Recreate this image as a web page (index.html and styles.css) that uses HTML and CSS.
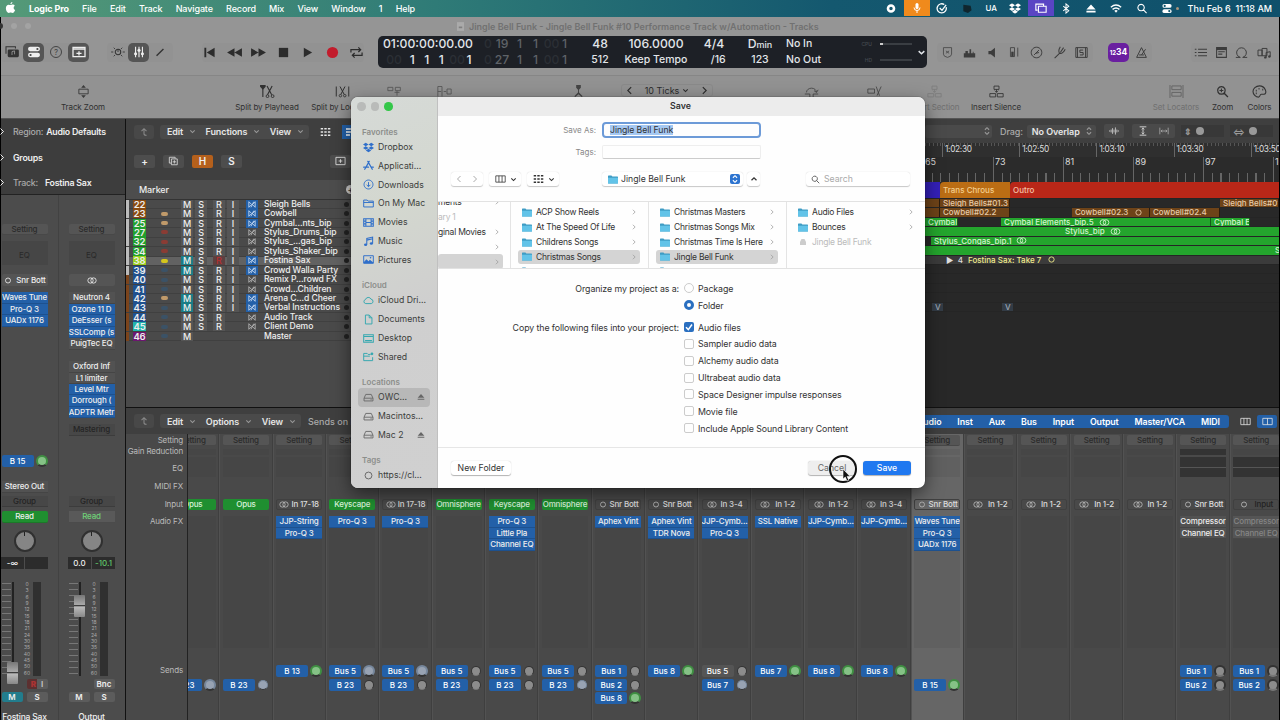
FILE: index.html
```html
<!DOCTYPE html>
<html lang="en">
<head>
    <meta charset="UTF-8">
    <meta name="viewport" content="width=device-width, initial-scale=1.0">
    <title>Jingle Bell Funk - Tracks</title>
    <link rel="stylesheet" href="styles.css">
</head>
<body>
    <svg class="defs" aria-hidden="true">
        <symbol id="apple" viewBox="0 0 12 14"><path fill="currentColor" d="M8.2 0c.1 1.400-1 2.600-2.300 2.600C5.800 1.300 6.900.2 8.200 0zM6.100 3.600c.6 0 1.400-.7 2.600-.6 1 .1 1.800.5 2.300 1.300-2 1.300-1.700 4 .4 4.900-.5 1.500-1.700 3.500-3 3.500-.9 0-1.200-.5-2.200-.5s-1.400.5-2.200.5C2.300 12.700.6 9.700.6 7.200c0-2.600 1.600-4 3.200-4 1 0 1.700.4 2.300.4z"/></symbol>
        <symbol id="stereo" viewBox="0 0 12 8"><g fill="none" stroke="currentColor"><circle cx="4.200" cy="4" r="3.200"/><circle cx="7.800" cy="4" r="3.200"/></g></symbol>
        <symbol id="mono" viewBox="0 0 12 8"><circle cx="6" cy="4" r="3" fill="none" stroke="currentColor"/></symbol>
        <symbol id="dropbox" viewBox="0 0 16 14"><path fill="currentColor" d="M4 0l4 2.600-4 2.600-4-2.600zM12 0l4 2.600-4 2.600-4-2.600zM4 5.200l4 2.600-4 2.600-4-2.600zM12 5.200l4 2.600-4 2.600-4-2.600zM8 8.700l4 2.600L8 14l-4-2.700z"/></symbol>
        <symbol id="apps" viewBox="0 0 16 16"><path fill="none" stroke="currentColor" stroke-width="1.800" stroke-linecap="round" d="M9 2L3.500 12M7 2l6.500 11.500M1 10.500h7M12 10.500h3M2.500 13.500l.2-.4"/></symbol>
        <symbol id="download" viewBox="0 0 16 16"><path fill="none" stroke="currentColor" stroke-width="1.400" d="M8 1.500a6.500 6.500 0 1 0 .01 0zM8 4.500v6.500M5.300 8.500L8 11.200l2.700-2.700"/></symbol>
        <symbol id="dir" viewBox="0 0 16 16"><path fill="none" stroke="currentColor" stroke-width="1.400" d="M1 3h5l1.500 1.500H15V13H1zM1 6.500h14"/></symbol>
        <symbol id="movie" viewBox="0 0 16 16"><path fill="none" stroke="currentColor" stroke-width="1.500" d="M1 2.500h14v11H1zM4.200 2.500v11M11.800 2.500v11M4 8h8M1 6h3M1 10h3M12 6h3M12 10h3"/></symbol>
        <symbol id="music" viewBox="0 0 16 16"><path fill="none" stroke="currentColor" stroke-width="1.500" d="M5.500 12.500V3.500L14 1.500v9M5.500 6L14 4"/><ellipse cx="3.800" cy="12.800" rx="2.300" ry="1.900" fill="currentColor"/><ellipse cx="12.200" cy="11" rx="2.300" ry="1.900" fill="currentColor"/></symbol>
        <symbol id="picture" viewBox="0 0 16 16"><path fill="none" stroke="currentColor" stroke-width="1.400" d="M1 2.500h14v11H1z"/><path fill="currentColor" d="M1 12l4-4.500 3 3 2-2 5 4v1H1z"/><circle cx="11" cy="5.500" r="1.200" fill="currentColor"/></symbol>
        <symbol id="cloud" viewBox="0 0 16 16"><path fill="none" stroke="currentColor" stroke-width="1.400" d="M4 12.500a3 3 0 0 1-.3-5.900A4.200 4.200 0 0 1 11.600 6a3.300 3.300 0 0 1 .4 6.500z"/></symbol>
        <symbol id="doc" viewBox="0 0 16 16"><path fill="none" stroke="currentColor" stroke-width="1.400" d="M3.500 1.500H9l4 4v9H3.500zM9 1.500v4h4"/></symbol>
        <symbol id="desktop" viewBox="0 0 16 16"><path fill="none" stroke="currentColor" stroke-width="1.500" d="M1 2.500h14v11H1zM1 5h14"/><path fill="currentColor" d="M3 10h10v2H3z"/></symbol>
        <symbol id="shared" viewBox="0 0 16 16"><path fill="none" stroke="currentColor" stroke-width="1.400" d="M1 3.500h5l1.500 1.500H11M14 9v5H1V3.500M1 7.500h9"/><circle cx="13" cy="4" r="2" fill="currentColor"/></symbol>
        <symbol id="drive" viewBox="0 0 16 16"><path fill="none" stroke="currentColor" stroke-width="1.300" d="M1.500 9L4 3.500h8L14.500 9v4h-13zM1.500 9h13M11 11.200h1.500"/></symbol>
        <symbol id="ring" viewBox="0 0 16 16"><circle cx="8" cy="8" r="5" fill="none" stroke="currentColor" stroke-width="1.400"/></symbol>
        <symbol id="eject" viewBox="0 0 12 12"><path fill="currentColor" d="M6 1.500l5 5.500H1zM1 8.500h10v1.800H1z"/></symbol>
        <symbol id="folder" viewBox="0 0 16 13"><path fill="#3f9cc4" d="M1 0h4.500L7 1.500h8a1 1 0 0 1 1 1V12a1 1 0 0 1-1 1H1a1 1 0 0 1-1-1V1a1 1 0 0 1 1-1z"/><path fill="#62c3e8" d="M0 3.500h16V12a1 1 0 0 1-1 1H1a1 1 0 0 1-1-1z"/></symbol>
        <symbol id="down" viewBox="0 0 8 8"><path fill="none" stroke="currentColor" stroke-width="1.300" d="M1.500 2.800L4 5.200l2.500-2.400"/></symbol>
        <symbol id="up" viewBox="0 0 8 8"><path fill="none" stroke="currentColor" stroke-width="1.300" d="M1.500 5.200L4 2.800l2.500 2.400"/></symbol>
        <symbol id="left" viewBox="0 0 8 8"><path fill="none" stroke="currentColor" d="M5.500 1L2.500 4l3 3"/></symbol>
        <symbol id="right" viewBox="0 0 8 8"><path fill="none" stroke="currentColor" d="M2.500 1l3 3-3 3"/></symbol>
        <symbol id="updown" viewBox="0 0 8 12"><path fill="none" stroke="currentColor" stroke-width="1.300" d="M1.500 4.500L4 2l2.500 2.500M1.500 7.500L4 10l2.500-2.500"/></symbol>
        <symbol id="search" viewBox="0 0 12 12"><path fill="none" stroke="currentColor" stroke-width="1.200" d="M5 1.500a3.500 3.500 0 1 0 .01 0zM7.600 7.600L11 11"/></symbol>
        <symbol id="columns" viewBox="0 0 14 10"><path fill="none" stroke="currentColor" d="M1 1h12v8H1zM5 1v8M9 1v8"/></symbol>
        <symbol id="split" viewBox="0 0 14 10"><path fill="none" stroke="currentColor" d="M1 1h12v8H1zM7 1v8"/></symbol>
        <symbol id="dots" viewBox="0 0 12 10"><path fill="currentColor" d="M0 0h3v2H0zM4.500 0h3v2h-3zM9 0h3v2H9zM0 4h3v2H0zM4.500 4h3v2h-3zM9 4h3v2H9zM0 8h3v2H0zM4.500 8h3v2h-3zM9 8h3v2H9z"/></symbol>
        <symbol id="back" viewBox="0 0 12 12"><path fill="none" stroke="currentColor" stroke-width="1.300" d="M3 5l3-3 3 3M6 2v6q0 2 3 2"/></symbol>
        <symbol id="flex" viewBox="0 0 12 10"><path fill="none" stroke="currentColor" stroke-width="1.200" d="M1.500 9V1l4 4-4 4M10.500 1v8l-4-4 4-4M4.500 9l4-8"/></symbol>
        <symbol id="scissors" viewBox="0 0 16 14"><path fill="none" stroke="currentColor" stroke-width="1.200" d="M3 3v10M7.500 1l5 9.500M13 1L8 10.500"/><path fill="currentColor" d="M0 0h6v2L3 5 0 2z"/><g fill="none" stroke="currentColor"><circle cx="8" cy="12" r="1.500"/><circle cx="13.500" cy="12" r="1.500"/></g></symbol>
        <symbol id="scissors-between" viewBox="0 0 18 14"><path fill="none" stroke="currentColor" stroke-width="1.200" d="M1.500 1v12M16.500 1v12M6 1l5 9.500M12 1L7 10.500"/><g fill="none" stroke="currentColor"><circle cx="6.500" cy="12" r="1.500"/><circle cx="11.700" cy="12" r="1.500"/></g></symbol>
        <symbol id="section" viewBox="0 0 18 14"><path fill="none" stroke="currentColor" d="M6 .5h6v4H6zM9 4.500V8M7 6l2 2 2-2M1 9.500h7v4H1zM10 9.500h7v4h-7z"/></symbol>
    </svg>

    <div class="screen">
        <header class="menubar">
            <svg class="apple"><use href="#apple"/></svg>
            <nav class="menus">
                <b>Logic Pro</b><span>File</span><span>Edit</span><span>Track</span><span>Navigate</span><span>Record</span><span>Mix</span><span>View</span><span>Window</span><span>1</span><span>Help</span>
            </nav>
            <div class="status">
                <svg viewBox="0 0 12 12"><circle cx="6" cy="6" r="3.300" fill="none" stroke="#fff" stroke-width="2.800"/></svg>
                <span class="pill orange"><svg viewBox="0 0 12 12"><rect x="4.500" y="1" width="3" height="6" rx="1.500" fill="#fff"/><path d="M3 5.500a3 3 0 0 0 6 0M6 8.500V11" fill="none" stroke="#fff"/></svg></span>
                <svg viewBox="0 0 12 12"><path d="M10.500 4.500A5 5 0 1 1 8.500 1.700M3.500 5.500L6 8l4.500-6" fill="none" stroke="#fff" stroke-width="1.400"/></svg>
                <svg viewBox="0 0 12 12"><path d="M2 2l8 1 1 5-4 3-5-2z" fill="#10262e"/></svg>
                <span class="ua">UA</span>
                <svg viewBox="0 0 16 14"><use href="#dropbox"/></svg>
                <span class="pill violet"><svg viewBox="0 0 14 12"><path d="M3 8.500H1v-7h9V4M4 4h9v7H4z" fill="none" stroke="#fff" stroke-width="1.300"/></svg></span>
                <svg viewBox="0 0 12 12"><path d="M3 3.500l6 5L6 11V1l3 2.500-6 5" fill="none" stroke="#fff" stroke-width="1.100"/></svg>
                <svg viewBox="0 0 12 12"><use href="#eject"/></svg>
                <svg viewBox="0 0 14 12"><path d="M1 4.500q6-5 12 0M3 7q4-3.300 8 0" fill="none" stroke="#fff" stroke-width="1.600"/><path d="M5 8.500q2-1.600 4 0L7 11z" fill="#fff"/></svg>
                <svg viewBox="0 0 12 12"><use href="#search"/></svg>
                <svg viewBox="0 0 12 12"><rect x="1" y="1" width="10" height="4.300" rx="2.100" fill="#fff"/><rect x="1" y="6.700" width="10" height="4.300" rx="2.100" fill="#fff"/><circle cx="3.500" cy="3.200" r="1.200" fill="#10556d"/><circle cx="8.500" cy="8.800" r="1.200" fill="#10556d"/></svg>
                <i class="mic-dot"></i>
                <span class="clock">Thu Feb 6&nbsp; 11:18 AM</span>
            </div>
        </header>

        <div class="titlebar">
            <div class="dim-lights"><i></i><i></i><i></i></div>
            <svg class="title-doc" viewBox="0 0 8 10"><path d="M0 0h8v10H0z" fill="#aaa"/><path d="M2 5h4v2H2z" fill="#808080"/></svg>
            <span>Jingle Bell Funk - Jingle Bell Funk #10 Performance Track w/Automation - Tracks</span>
        </div>

        <div class="control-bar">
            <div class="ctl-group left-group">
                <span class="ctl"><svg viewBox="0 0 16 14"><path d="M1 9V1h11v2" fill="none" stroke="#333" stroke-width="1.200"/><rect x="3" y="4" width="13" height="9" rx="1.500" fill="#333"/><path d="M8 10.500V6.500l3-.8v4" stroke="#999" fill="none"/></svg></span>
                <span class="ctl on"><svg viewBox="0 0 16 14"><rect x="1" y="1" width="14" height="5" rx="2.500" fill="#eee"/><rect x="1" y="8" width="14" height="5" rx="2.500" fill="#eee"/><circle cx="12" cy="3.500" r="1.300" fill="#444"/><circle cx="4" cy="10.500" r="1.300" fill="#444"/></svg></span>
                <span class="ctl help">?</span>
                <span class="ctl on"><svg viewBox="0 0 16 14"><path d="M1 1.500h14v11H1zM1 3.500h14M5 8.500h6M8 6v5" fill="none" stroke="#eee" stroke-width="1.500"/></svg></span>
            </div>
            <div class="ctl-group edit-group">
                <span class="ctl"><svg viewBox="0 0 16 14"><circle cx="8" cy="7" r="3.200" fill="none" stroke="#333" stroke-width="1.200"/><path d="M8 4v3M0 7h2.500M13.500 7H16M3 2l1.500 1.500M13 2l-1.500 1.500M3 12l1.500-1.500M13 12l-1.500-1.500" stroke="#333"/></svg></span>
                <span class="ctl on"><svg viewBox="0 0 16 14"><path d="M4 1v12M8 1v12M12 1v12" stroke="#eee" stroke-width="1.300"/><circle cx="4" cy="9" r="1.800" fill="#eee"/><circle cx="8" cy="5" r="1.800" fill="#eee"/><circle cx="12" cy="9" r="1.800" fill="#eee"/></svg></span>
                <span class="ctl"><svg viewBox="0 0 16 14"><path d="M4 11.500l8-8" stroke="#333" stroke-width="1.600"/></svg></span>
            </div>
            <div class="ctl-group transport">
                <svg viewBox="0 0 16 14"><path d="M2.500 2v10h2V2zM13.500 2v10L5 7z" fill="#2c2c2c"/></svg>
                <svg viewBox="0 0 16 14"><path d="M8 2.500v9L0 7zM16 2.500v9L8 7z" fill="#2c2c2c"/></svg>
                <svg viewBox="0 0 16 14"><path d="M0 2.500v9L8 7zM8 2.500v9L16 7z" fill="#2c2c2c"/></svg>
                <svg viewBox="0 0 16 14"><path d="M3 2h10v10H3z" fill="#2c2c2c"/></svg>
                <svg viewBox="0 0 16 14"><path d="M4 2v10l9-5z" fill="#2c2c2c"/></svg>
                <svg viewBox="0 0 16 14"><circle cx="8" cy="7" r="6" fill="#c21c2c"/></svg>
                <svg viewBox="0 0 16 14"><path d="M2 7V4h10M10 1.500L12.500 4 10 6.500M14 7v3H4M6 7.500L3.500 10 6 12.500" fill="none" stroke="#2c2c2c" stroke-width="1.300"/></svg>
            </div>
            <div class="lcd">
                <div class="lcd-col time"><b>01:00:00:00.00</b><b class="beats"><i>00</i><em>1</em><em>1</em><em>1</em><i>00</i><em>1</em></b></div>
                <div class="lcd-col range"><b><i>0</i><em>19</em><em>1</em><em>1</em><i>00</i><em>1</em></b><b><i>0</i><em>27</em><em>1</em><em>1</em><i>00</i><em>1</em></b></div>
                <div class="lcd-col rate"><b>48</b><span>512</span></div>
                <div class="lcd-col tempo"><b>106.0000</b><span>Keep Tempo</span></div>
                <div class="lcd-col sig"><b>4/4</b><span>&nbsp; &nbsp;/16</span></div>
                <div class="lcd-col key"><b>D<small>min</small></b><span>123</span></div>
                <div class="lcd-col io"><span>No In</span><span>No Out</span></div>
                <div class="lcd-col load"><span>CPU<i></i></span><span>HD<i></i></span></div>
                <svg class="lcd-more"><use href="#down"/></svg>
            </div>
            <div class="ctl-group tools">
                <svg viewBox="0 0 16 16"><path d="M3 2h10v8q0 3-5 4-5-1-5-4zM6 6l4 3M10 6L6 9" fill="none" stroke="#444"/></svg>
                <svg viewBox="0 0 16 16"><path d="M1 9h14v5H1zM3 6h3v3H3zM8 4h2v5H8zM12 7h1v2h-1z" fill="#3c3c3c"/></svg>
                <svg viewBox="0 0 16 16"><path d="M3 6h3l5-4v12l-5-4H3z" fill="#3c3c3c"/></svg>
                <svg viewBox="0 0 16 16"><path d="M3 2h5v11H3zM12 2v11" fill="none" stroke="#3c3c3c"/><path d="M4 7h3v6H4z" fill="#3c3c3c"/></svg>
                <svg viewBox="0 0 16 16"><path d="M8 1.500a6.500 6.500 0 1 0 .01 0zM5 11l6-6M7 9l4-1" fill="none" stroke="#3c3c3c" stroke-width="1.200"/></svg>
                <svg viewBox="0 0 16 16"><path d="M2 15l6-6M8 9q-2-3 1-8M8 9q4 1 7-5M9 8l4-6" fill="none" stroke="#3c3c3c" stroke-width="1.300"/></svg>
                <svg viewBox="0 0 16 16"><path d="M1 2h14v12H1zM3 2v12M13 2v12M10 5H6v3h4v3H6" fill="none" stroke="#3c3c3c" stroke-width="1.200"/></svg>
            </div>
            <div class="ctl-group count">
                <b class="count-in"><small>12</small>34</b>
                <svg viewBox="0 0 16 16"><path d="M8 2l6 12H2zM5 11h6M8 11l5-7" fill="none" stroke="#3c3c3c" stroke-width="1.200"/></svg>
            </div>
            <div class="ctl-group browsers">
                <svg viewBox="0 0 16 16"><path d="M1 4h2M1 8h2M1 12h2M5 4h11M5 8h11M5 12h11" stroke="#3c3c3c" stroke-width="1.300"/></svg>
                <svg viewBox="0 0 16 16"><path d="M2 2h12v12H2zM4 7h8M4 10h5" fill="none" stroke="#3c3c3c" stroke-width="1.300"/><path d="M2 2h12v3H2z" fill="#3c3c3c"/></svg>
                <svg viewBox="0 0 16 16"><path d="M1 14h5.500A6 6 0 1 1 9.500 14H15" fill="none" stroke="#3c3c3c" stroke-width="1.200"/></svg>
                <svg viewBox="0 0 18 16"><path d="M1 5h5v7H1zM6 3h6v9H6zM11 14V8l5-1v6" fill="none" stroke="#3c3c3c" stroke-width="1.200"/><circle cx="10" cy="14" r="1.500" fill="#3c3c3c"/><circle cx="15" cy="13" r="1.500" fill="#3c3c3c"/></svg>
            </div>
        </div>

        <div class="toolbar">
            <div class="tool zoom-tool"><svg viewBox="0 0 16 14"><path d="M3 4.500h10v5H3z" fill="none" stroke="#3a3a3a"/><path d="M8 0l2.500 3h-5zM8 14l2.500-3h-5z" fill="#3a3a3a"/></svg>Track Zoom</div>
            <div class="tool playhead-tool"><svg><use href="#scissors"/></svg>Split by Playhead</div>
            <div class="tool locator-tool"><svg><use href="#scissors-between"/></svg>Split by Locators</div>
            <div class="tool join-tool"><svg viewBox="0 0 18 14"><path d="M1 2h6v4H1zM10 2h6v4h-6zM9 8h6M12 6v6" fill="none" stroke="#555"/></svg></div>
            <div class="tool bounce-tool"><svg viewBox="0 0 18 14"><path d="M1 1h5v12M1 1v12M1 7h4M8 7h3M12 4h5v6h-5z" fill="none" stroke="#555"/></svg></div>
            <div class="tool nudge-icon"><svg viewBox="0 0 14 14"><path d="M4.500 0h5v3L7.500 5v3l4 4-1 1L7 10l-3.500 3-1-1 4-4V5l-2-2z" fill="#444"/></svg></div>
            <div class="nudge"><svg><use href="#left"/></svg><span>10 Ticks <svg><use href="#down"/></svg></span><svg><use href="#right"/></svg></div>
            <div class="tool repeat-tool"><svg viewBox="0 0 18 14"><path d="M3 8a6 5 0 0 1 12 0M12 6l3 2 2-3M1 10h6v4M11 14v-4h6" fill="none" stroke="#444"/></svg></div>
            <div class="tool cut-tool"><svg viewBox="0 0 18 14"><path d="M1 4h8v5H1zM11 1l4 11M17 1l-5 11" fill="none" stroke="#444"/></svg></div>
            <div class="tool faded insert-section"><svg><use href="#section"/></svg>Insert Section</div>
            <div class="tool silence-tool"><svg><use href="#section"/></svg>Insert Silence</div>
            <div class="tool faded set-locators"><svg viewBox="0 0 16 14"><path d="M3 1h10v4H3zM1 0v14M15 0v14M3 8h10v4H3z" fill="none" stroke="#444"/></svg>Set Locators</div>
            <div class="tool small-tool"><svg viewBox="0 0 12 12"><use href="#search"/><path d="M3.200 5h3.600M5 3.200v3.600" stroke="#333"/></svg>Zoom</div>
            <div class="tool small-tool"><svg viewBox="0 0 16 14"><path d="M8 1C4 1 1 4 1 7s3 6 6 6c2 0 1-3 3-3h3c4-1 1-9-5-9z" fill="none" stroke="#333" stroke-width="1.200"/><path d="M4 6h1M7 4h1M11 5h1M4 9h1" stroke="#333" stroke-width="1.800"/></svg>Colors</div>
        </div>

        <main class="workspace">
            <aside class="inspector">
                <div class="inspector-head">
                    <p><svg><use href="#right"/></svg><span>Region:</span> Audio Defaults</p>
                    <p><svg><use href="#right"/></svg>Groups</p>
                    <p><svg><use href="#right"/></svg><span>Track:</span>&nbsp; Fostina Sax</p>
                </div>
                <div class="inspector-strips" id="inspector-strips"></div>
            </aside>

            <div class="main-column">
                <section class="tracks-area">
                    <div class="track-panel">
                        <div class="panel-bar">
                            <span class="back-btn"><svg><use href="#back"/></svg></span>
                            <div class="bar-menus tracks-menus"><span>Edit <svg><use href="#down"/></svg></span><span>Functions <svg><use href="#down"/></svg></span><span>View <svg><use href="#down"/></svg></span></div>
                            <svg class="grid-icon"><use href="#dots"/></svg>
                            <span class="list-icon"><svg viewBox="0 0 12 10"><path d="M0 2h5M7 2h5M0 5h8M10 5h2M0 8h4M6 8h6" stroke="#fff" stroke-width="1.500"/></svg></span>
                        </div>
                        <div class="track-tools">
                            <span>+</span>
                            <span><svg viewBox="0 0 12 12"><path d="M3 8.500H1v-7h7V3M3.500 3.500h7v7h-7zM7 5v4M5 7h4" fill="none" stroke="#ddd"/></svg></span>
                            <span class="hide-btn">H</span>
                            <span>S</span>
                            <span class="catch-btn"><svg viewBox="0 0 12 10"><path d="M1 1h10v8H1zM6 3v4M4 5h4" fill="none" stroke="#ddd"/></svg></span>
                        </div>
                        <div class="marker-head"><span>Marker</span><i>+</i></div>
                        <div class="track-list" id="track-list"></div>
                    </div>

                    <div class="arrange">
                        <div class="panel-bar arrange-bar">
                            <span class="snap-box"><svg><use href="#updown"/></svg></span>
                            <span class="drag-label">Drag:</span>
                            <span class="drag-box">No Overlap <svg><use href="#updown"/></svg></span>
                            <span class="wave-btn"><svg viewBox="0 0 14 10"><path d="M1 4v2M3 3v4M5 1v8M7 3v4M9 0v10M11 3v4M13 4v2" stroke="#ccc" stroke-width="1.200"/></svg></span>
                            <span class="zoom-btns"><svg viewBox="0 0 12 12"><path d="M2 1h8M2 11h8M6 2v8M4.500 4L6 2.500 7.500 4M4.500 8L6 9.500 7.500 8" fill="none" stroke="#ccc" stroke-width="1.200"/></svg><svg viewBox="0 0 12 12"><path d="M1 2v8M11 2v8M2.500 6h7M4 4.500L2.500 6 4 7.500M8 4.500L9.500 6 8 7.500" fill="none" stroke="#aaa"/></svg></span>
                            <span class="slider v-slider">⇕<i></i></span>
                            <span class="slider h-slider">⇔<i></i></span>
                        </div>
                        <div class="ruler">
                            <div class="ruler-time" id="ruler-time"></div>
                            <div class="ruler-bars" id="ruler-bars"></div>
                        </div>
                        <div class="lanes" id="lanes"></div>
                    </div>
                </section>

                <section class="mixer">
                    <div class="panel-bar mixer-bar">
                        <span class="back-btn"><svg><use href="#back"/></svg></span>
                        <div class="bar-menus mixer-menus"><span>Edit <svg><use href="#down"/></svg></span><span>Options <svg><use href="#down"/></svg></span><span>View <svg><use href="#down"/></svg></span></div>
                        <span class="sends-label">Sends on Faders: Off</span>
                        <div class="filters"><span>Audio</span><span>Inst</span><span>Aux</span><span>Bus</span><span>Input</span><span>Output</span><span>Master/VCA</span><span>MIDI</span></div>
                        <span class="width-btn"><svg><use href="#columns"/></svg></span>
                        <span class="width-btn on"><svg><use href="#split"/></svg></span>
                    </div>
                    <div class="mixer-body">
                        <div class="row-labels">
                            <span class="l-setting">Setting</span><span class="l-gain">Gain Reduction</span><span class="l-eq">EQ</span><span class="l-midi">MIDI FX</span><span class="l-input">Input</span><span class="l-fx">Audio FX</span><span class="l-sends">Sends</span>
                        </div>
                        <div class="strips"><div class="strip-row" id="strip-row"></div></div>
                    </div>
                </section>
            </div>
        </main>

        <div class="dialog">
            <aside class="places">
                <div class="lights"><i></i><i></i><i class="green"></i></div>
                <h4>Favorites</h4>
                <p><svg><use href="#dropbox"/></svg>Dropbox</p>
                <p><svg><use href="#apps"/></svg>Applicati...</p>
                <p><svg><use href="#download"/></svg>Downloads</p>
                <p><svg><use href="#dir"/></svg>On My Mac</p>
                <p><svg><use href="#movie"/></svg>Movies</p>
                <p><svg><use href="#music"/></svg>Music</p>
                <p><svg><use href="#picture"/></svg>Pictures</p>
                <h4>iCloud</h4>
                <p class="teal"><svg><use href="#cloud"/></svg>iCloud Dri...</p>
                <p class="teal"><svg><use href="#doc"/></svg>Documents</p>
                <p class="teal"><svg><use href="#desktop"/></svg>Desktop</p>
                <p class="teal"><svg><use href="#shared"/></svg>Shared</p>
                <h4>Locations</h4>
                <p class="grey current"><svg><use href="#drive"/></svg>OWC...<svg class="eject"><use href="#eject"/></svg></p>
                <p class="grey"><svg><use href="#drive"/></svg>Macintos...</p>
                <p class="grey"><svg><use href="#drive"/></svg>Mac 2<svg class="eject"><use href="#eject"/></svg></p>
                <h4>Tags</h4>
                <p class="grey"><svg><use href="#ring"/></svg>https://cl...</p>
            </aside>
            <div class="dialog-main">
                <div class="dialog-title">Save</div>
                <div class="field-row name-row"><label>Save As:</label><span class="name-field"><mark>Jingle Bell Funk</mark></span></div>
                <div class="field-row tags-row"><label>Tags:</label><span class="tags-field"></span></div>
                <div class="nav-row">
                    <span class="nav-btns"><svg><use href="#left"/></svg><svg><use href="#right"/></svg></span>
                    <span class="view-btn"><svg class="wide"><use href="#columns"/></svg><svg><use href="#down"/></svg></span>
                    <span class="view-btn group-btn"><svg class="wide"><use href="#dots"/></svg><svg><use href="#down"/></svg></span>
                    <span class="path-box"><svg class="folder"><use href="#folder"/></svg>Jingle Bell Funk<svg class="path-arrows"><use href="#updown"/></svg></span>
                    <span class="collapse-btn"><svg><use href="#up"/></svg></span>
                    <span class="search-box"><svg><use href="#search"/></svg>Search</span>
                </div>
                <div class="browser" id="browser"></div>
                <div class="options">
                    <div class="option"><label>Organize my project as a:</label><i class="radio"></i>Package</div>
                    <div class="option"><label></label><i class="radio checked"></i>Folder</div>
                    <div class="option files-option"><label>Copy the following files into your project:</label><i class="check checked"><svg viewBox="0 0 10 10"><path d="M2 5.300L4.300 7.600 8 2.500" fill="none" stroke="#fff" stroke-width="1.500"/></svg></i>Audio files</div>
                    <div class="option"><label></label><i class="check"></i>Sampler audio data</div>
                    <div class="option"><label></label><i class="check"></i>Alchemy audio data</div>
                    <div class="option"><label></label><i class="check"></i>Ultrabeat audio data</div>
                    <div class="option"><label></label><i class="check"></i>Space Designer impulse responses</div>
                    <div class="option"><label></label><i class="check"></i>Movie file</div>
                    <div class="option"><label></label><i class="check"></i>Include Apple Sound Library Content</div>
                </div>
                <div class="dialog-foot">
                    <button class="new-folder">New Folder</button>
                    <button class="cancel">Cancel</button>
                    <button class="save">Save</button>
                </div>
            </div>
        </div>

        <svg class="pointer" viewBox="0 0 30 30"><circle cx="15" cy="15" r="13" fill="none" stroke="#111" stroke-width="2"/><path d="M15 15v10l2.300-2 1.700 4 1.800-.8-1.700-3.800h3z" fill="#111" stroke="#fff" stroke-width=".6"/></svg>
    </div>
    <script src="script.js"></script>
</body>
</html>
```
FILE: styles.css
```css
* {
    box-sizing: border-box;
}

body {
    margin: 0;
    background: #000;
    font-family: Inter, "Liberation Sans", sans-serif;
    font-size: 9px;
    color: #ddd;
}

p, h4 {
    margin: 0;
}

i, em {
    font-style: normal;
}

svg {
    display: block;
    flex: none;
}

.defs {
    position: absolute;
    width: 0;
    height: 0;
}

.screen {
    position: relative;
    width: 1280px;
    height: 720px;
    overflow: hidden;
    display: flex;
    flex-direction: column;
    padding: 0 1px;
    white-space: nowrap;
}

/* menu bar */
.menubar {
    height: 17px;
    flex: none;
    display: flex;
    align-items: center;
    padding: 0 8px 1px 5px;
    margin: 0 -1px;
    background: linear-gradient(90deg, #559a78, #2f7b77 34%, #14586f 65%, #0f506b);
    color: #fff;
    font-weight: 500;
}

.apple {
    width: 11px;
    height: 12px;
}

.menus {
    display: flex;
    gap: 13.200px;
    margin-left: 13px;
    letter-spacing: -0.120px;
}

.status {
    margin-left: auto;
    display: flex;
    align-items: center;
    gap: 13.300px;
}

.status > svg {
    width: 12px;
    height: 11px;
}

.status .ua {
    font-size: 8px;
    margin: 0 -1px;
}

.pill {
    width: 26px;
    height: 16px;
    display: flex;
    align-items: center;
    justify-content: center;
    margin: 0 -7px;
}

.pill svg {
    width: 12px;
    height: 12px;
}

.orange {
    background: #f08a1c;
}

.violet {
    background: #5a45c4;
}

.mic-dot {
    width: 3px;
    height: 3px;
    border-radius: 50%;
    background: #a8937a;
    margin: 0 -5px 0 -10px;
}

.clock {
    letter-spacing: 0;
}

/* title and control bar */
.titlebar {
    height: 18px;
    flex: none;
    display: flex;
    align-items: center;
    background: #959595;
    color: #717171;
    font-weight: 600;
    font-size: 9px;
}

.title-doc {
    width: 7px;
    height: 9px;
    margin: 0 5px 0 425px;
}

.dim-lights {
    display: flex;
    gap: 8px;
    width: 31px;
}

.dim-lights i {
    width: 6px;
    height: 6px;
    border-radius: 50%;
    background: #a3a3a3;
}

.dim-lights i:first-child {
    margin-left: -4px;
    background: #333;
}

.control-bar {
    height: 41px;
    flex: none;
    display: flex;
    align-items: center;
    background: #959595;
    border-bottom: 1px solid #868686;
    padding-bottom: 6px;
}

.ctl-group {
    display: flex;
    align-items: center;
    flex: none;
    height: 19px;
    background: #929292;
    border-radius: 4px;
}

.ctl-group > svg {
    width: 13px;
    height: 13px;
}

.ctl {
    width: 21px;
    height: 19px;
    border-radius: 5px;
    display: flex;
    align-items: center;
    justify-content: center;
}

.ctl svg {
    width: 14px;
    height: 12px;
}

.ctl.on {
    background: #555;
}

.left-group {
    width: 88px;
    gap: 1px;
}

.left-group .help {
    width: 12px;
    height: 12px;
    margin: 0 5px;
    border: 1px solid #444;
    border-radius: 50%;
    color: #444;
    font-size: 8px;
}

.edit-group {
    margin-left: 18px;
    width: 66px;
}

.transport {
    margin-left: 29px;
    width: 162px;
    justify-content: space-between;
}

.transport > svg {
    width: 15px;
    height: 13px;
}

.lcd {
    display: flex;
    align-items: center;
    flex: none;
    width: 549px;
    height: 32px;
    margin-left: 14px;
    border-radius: 5px;
    background: #1d2026;
    color: #e2e6ea;
    padding-left: 5px;
}

.lcd-col {
    display: flex;
    flex-direction: column;
    align-items: center;
    justify-content: center;
    flex: none;
}

.lcd-col > * {
    height: 16px;
    line-height: 16px;
}

.lcd b {
    font-weight: 500;
    font-size: 12.200px;
}

.lcd span {
    font-size: 10.500px;
    font-weight: 500;
}

.lcd b i {
    color: #2b2f35;
}

.lcd .time {
    width: 90px;
    align-items: flex-start;
}

.time .beats {
    display: grid;
    grid-template-columns: 22px 14.500px 14.500px 14.500px 17px 7px;
    text-align: center;
}

.lcd .range {
    width: 90px;
    margin-left: 10px;
    color: #5f6368;
    align-items: flex-start;
}

.range b {
    display: grid;
    grid-template-columns: 10px 18px 17px 15px 17px 9px;
    text-align: center;
}

.lcd .rate {
    width: 44px;
    margin-left: 5px;
}

.lcd .tempo {
    width: 68px;
}

.lcd .sig {
    width: 48px;
}

.lcd .key {
    width: 44px;
}

.key small {
    font-size: 9px;
}

.lcd .io {
    width: 50px;
    align-items: flex-start;
    margin-left: 4px;
}

.lcd .load {
    width: 76px;
    align-items: flex-end;
    color: #454a50;
}

.load span {
    display: flex;
    align-items: center;
    font-size: 5px;
}

.load i {
    width: 32px;
    height: 2px;
    margin-left: 8px;
    background: #3a3e43;
}

.load span:first-child i {
    border-left: 3px solid #ccc;
}

.lcd-more {
    width: 9px;
    height: 9px;
    margin-left: 5px;
}

.tools {
    margin-left: 10px;
    width: 156px;
    padding: 0 5px 0 4px;
    justify-content: space-between;
}

.count {
    margin-left: 15px;
    width: 44px;
    gap: 6px;
    padding-right: 4px;
}

.count-in {
    width: 22px;
    height: 19px;
    line-height: 19px;
    border-radius: 5px;
    background: #6a1fa0;
    color: #fff;
    font-size: 8.500px;
    text-align: center;
}

.count-in small {
    font-size: 6px;
}

.browsers {
    margin-left: auto;
    width: 88px;
    padding: 0 6px 0 3px;
    justify-content: space-between;
}

.browsers svg:last-child {
    width: 17px;
}

/* toolbar */
.toolbar {
    height: 43px;
    flex: none;
    display: flex;
    background: #929292;
    border-bottom: 1px solid #555;
    color: #303030;
    font-size: 8px;
}

.tool {
    display: flex;
    flex-direction: column;
    align-items: center;
    flex: none;
    padding-top: 9px;
    gap: 4px;
    letter-spacing: -0.1px;
}

.tool svg {
    width: 15px;
    height: 13px;
}

.faded {
    color: #707070;
}

.zoom-tool {
    width: 60px;
    margin-left: 52px;
}

.playhead-tool {
    width: 80px;
    margin-left: 114px;
}

.locator-tool {
    width: 70px;
    margin-left: 0;
}

.join-tool {
    width: 34px;
}

.bounce-tool {
    width: 66px;
}

.nudge-icon {
    width: 30px;
    margin-left: 86px;
}

.nudge {
    display: flex;
    height: 13px;
    width: 92px;
    margin: 8px 0 0 28px;
    align-items: center;
    justify-content: space-between;
    font-size: 9px;
    color: #2c2c2c;
    border: 1px solid #8a8a8a;
    border-radius: 3px;
    padding: 0 3px;
}

.nudge svg {
    width: 9px;
    height: 9px;
}

.nudge span {
    display: flex;
    align-items: center;
    gap: 3px;
}

.nudge span svg {
    width: 7px;
    height: 7px;
}

.repeat-tool {
    width: 30px;
    margin-left: 83px;
}

.cut-tool {
    width: 40px;
    margin-left: 28px;
}

.insert-section {
    width: 64px;
    margin-left: 8px;
}

.silence-tool {
    width: 60px;
    margin-left: 0;
}

.set-locators {
    width: 56px;
    margin-left: auto;
}

.small-tool {
    width: 37px;
}

.small-tool:last-child {
    margin-right: 1px;
}

.faded svg {
    opacity: 0.6;
}

/* workspace */
.workspace {
    flex: 1;
    display: flex;
    min-height: 0;
}

.inspector {
    width: 125px;
    flex: none;
    background: #4c4c4c;
    border-right: 1px solid #111;
    display: flex;
    flex-direction: column;
}

.inspector-head {
    height: 76px;
    background: #3d3d3d;
    border-bottom: 1px solid #222;
    font-weight: 600;
    font-size: 8.800px;
    letter-spacing: -0.220px;
    color: #eee;
}

.inspector-head p {
    height: 25.500px;
    display: flex;
    align-items: center;
}

.inspector-head svg {
    width: 8px;
    height: 9px;
    margin: 0 7px 0 -3px;
}

.inspector-head span {
    color: #aaa;
    margin-right: 3px;
    font-weight: 500;
}

.inspector-strips {
    display: flex;
    flex: 1;
    min-height: 0;
}

.ins-strip {
    display: flex;
    flex-direction: column;
    align-items: center;
    width: 58px;
    border-right: 1px solid #424242;
    padding: 29px 10px 0 0;
    font-size: 8px;
    overflow: hidden;
}

.ins-strip.wide {
    width: 66px;
    padding-right: 1px;
    border: 0;
}

.slot {
    width: 46px;
    height: 11.450px;
    line-height: 11px;
    text-align: center;
    font-weight: 500;
    font-size: 8px;
    letter-spacing: -0.150px;
    color: #eee;
    flex: none;
    overflow: hidden;
    border-bottom: 1px solid rgba(0, 0, 0, 0.15);
}

.slot.setting {
    background: #555;
    color: #2a2a2a;
    border-radius: 2px;
}

.slot.blue {
    background: #2360a8;
}

.slot.green {
    background: #1f8f30;
    border-radius: 2px;
}

.slot.gray {
    background: #525252;
}

.slot.none {
    border-color: transparent;
}

.slot.dark {
    background: #474747;
    color: #242424;
}

.slot.dim {
    background: #555;
    color: #858585;
}

.slot.read {
    background: #595959;
    color: #6fd077;
}

.ins-strip .eq {
    width: 46px;
    height: 24px;
    margin: 6px 0 9px;
    background: #464646;
    color: #292929;
    text-align: center;
    line-height: 28px;
    flex: none;
}

.ins-input {
    display: flex;
    align-items: center;
    justify-content: center;
    gap: 3px;
    width: 46px;
    height: 12px;
    background: #555;
    border-radius: 2px;
    color: #eee;
    font-weight: 500;
    margin-bottom: 6px;
    flex: none;
    letter-spacing: -0.150px;
}

.ins-input svg {
    width: 10px;
    height: 7px;
}

.ins-fx {
    height: 162px;
    flex: none;
}

.ins-send {
    height: 26.500px;
    flex: none;
    width: 46px;
    display: flex;
}

.ins-strip .slot.out {
    height: 12px;
    margin-bottom: 3px;
}

.ins-strip .slot.group {
    margin-bottom: 4px;
}

.pan {
    width: 22px;
    height: 22px;
    flex: none;
    margin: 7px 0 5px;
    border-radius: 50%;
    background: #858585;
    border: 2px solid #303030;
    display: flex;
    justify-content: center;
}

.pan::before {
    content: "";
    width: 1px;
    height: 4px;
    background: #222;
}

.values {
    display: flex;
    gap: 1px;
    width: 47px;
    flex: none;
    margin-bottom: 13px;
}

.values span {
    flex: 1;
    height: 12px;
    line-height: 12px;
    background: #2c2c2c;
    text-align: center;
    color: #eee;
    font-weight: 500;
}

.values .hot {
    color: #5fc568;
}

.fader {
    display: flex;
    width: 46px;
    height: 94px;
    flex: none;
}

.fader-track {
    width: 20px;
    height: 94px;
    display: flex;
    justify-content: center;
    background: repeating-linear-gradient(#777 0 1px, transparent 1px 6px) 0 1px / 9px 92px no-repeat, linear-gradient(#222, #222) 10px 0 / 2px 94px no-repeat;
}

.fader-cap {
    width: 11px;
    height: 22px;
    border-radius: 1px;
    margin-left: 2px;
    background: linear-gradient(#777, #aaa 45%, #333 48%, #bbb 54%, #888);
}

.scale {
    width: 11px;
    display: flex;
    flex-direction: column;
    justify-content: space-between;
    align-items: center;
    font-size: 5px;
    line-height: 5px;
    color: #aaa;
}

.meter {
    width: 8px;
    background: #303030;
}

.ins-buttons {
    width: 46px;
    display: flex;
    justify-content: space-between;
    flex: none;
    margin-top: 3px;
}

.ins-buttons.end {
    justify-content: flex-end;
}

.ins-buttons span {
    width: 21px;
    height: 10px;
    line-height: 10px;
    background: #5c5c5c;
    border-radius: 2px;
    text-align: center;
    color: #eee;
    font-weight: 600;
}

.ins-buttons .rec {
    background: linear-gradient(90deg, #5c3030 50%, #5c5c5c 50%);
    color: #ccc;
    word-spacing: 3px;
}

.ins-buttons .rec b {
    color: #a33;
}

.ins-buttons .muted {
    background: #227d8d;
}

.ins-name {
    margin-top: 10px;
    font-weight: 500;
    color: #eee;
    font-size: 8.500px;
    letter-spacing: -0.2px;
}

.main-column {
    flex: 1;
    min-width: 0;
    display: flex;
    flex-direction: column;
}

.tracks-area {
    display: flex;
    height: 289px;
    flex: none;
    border-bottom: 1px solid #111;
}

.panel-bar {
    height: 25px;
    flex: none;
    display: flex;
    align-items: center;
    background: #3f3f3f;
    font-weight: 600;
    letter-spacing: -0.1px;
    color: #e6e6e6;
}

.back-btn {
    width: 20px;
    height: 14px;
    margin-left: 8px;
    display: flex;
    align-items: center;
    justify-content: center;
    background: #484848;
    border-radius: 3px;
    color: #888;
    flex: none;
}

.back-btn svg {
    width: 10px;
    height: 10px;
}

.bar-menus {
    display: flex;
    align-items: center;
    justify-content: space-between;
    flex: none;
    height: 14px;
    margin-left: 6px;
    padding: 0 5px 0 7px;
    background: #4a4a4a;
    border-radius: 3px;
}

.bar-menus span {
    display: flex;
    align-items: center;
    gap: 6px;
}

.bar-menus svg {
    width: 7px;
    height: 7px;
    color: #999;
}

.tracks-menus {
    width: 149px;
}

.mixer-menus {
    width: 141px;
}

.track-panel {
    width: 799px;
    flex: none;
    background: #4a4a4a;
}

.grid-icon {
    width: 11px;
    height: 8px;
    margin-left: 11px;
}

.list-icon {
    margin-left: 11px;
    padding: 2px 4px;
    background: #2360a8;
}

.list-icon svg {
    width: 12px;
    height: 10px;
}

.track-tools {
    height: 36px;
    display: flex;
    align-items: center;
    gap: 8px;
    padding: 0 0 2px 8px;
    background: #3f3f3f;
}

.track-tools span {
    width: 21px;
    height: 13px;
    display: flex;
    align-items: center;
    justify-content: center;
    border-radius: 2px;
    background: #4d4d4d;
    font-weight: 600;
    font-size: 10px;
    color: #eee;
}

.track-tools svg {
    width: 11px;
    height: 10px;
}

.track-tools .hide-btn {
    background: #b5601c;
}

.track-tools .catch-btn {
    margin-left: 80px;
}

.marker-head {
    height: 20px;
    display: flex;
    align-items: center;
    padding-left: 13px;
    font-weight: 500;
    letter-spacing: -0.1px;
    color: #eee;
    background: #4d4d4d;
    border-bottom: 1px solid #333;
}

.marker-head i {
    margin-left: 177px;
    width: 9px;
    height: 9px;
    line-height: 9px;
    border-radius: 50%;
    background: #ccc;
    color: #333;
    text-align: center;
}

.track {
    display: flex;
    height: 9.430px;
    align-items: center;
    font-weight: 500;
    font-size: 8.600px;
    letter-spacing: -0.080px;
    color: #eee;
    border-bottom: 1px solid #404040;
}

.track > * {
    flex: none;
    height: 9px;
    line-height: 9px;
}

.track.selected {
    background: #626262;
}

.track .edge {
    width: 3px;
    background: #bbb;
    margin-right: 4px;
}

.track .edge.brown {
    background: #7b441c;
}

.track .num {
    width: 13px;
    text-align: center;
    font-weight: 600;
    font-size: 9.500px;
}

.num.brown { background: #8a4a10; }
.num.green { background: #22a02e; }
.num.lime { background: #9ad01e; }
.num.navy { background: #20518e; }
.num.cyan { background: #21b5ab; }
.num.purple { background: #6c1670; }

.track .inst {
    width: 7px;
    height: 4px;
    margin: 0 13px 0 15px;
    border-radius: 2px;
    background: #3b5266;
}

.inst.red { background: #8a3c34; }
.inst.gold { background: #c09a6a; }
.inst.yellow { background: #d4c51c; }
.inst.none { visibility: hidden; }

.track .btn {
    width: 12px;
    text-align: center;
    margin-right: 2px;
    font-size: 9px;
    background: #555;
}

.track .btn.off {
    visibility: hidden;
}

.track .btn.cyan {
    background: #1b7d86;
}

.track .btn.rec {
    color: #b52f2f;
    background: #5d4040;
}

.track .btn.gap {
    margin-left: 4px;
}

.track .flex {
    width: 12px;
    padding: 1px;
    margin: 0 6px 0 5px;
    color: #bbb;
}

.track .flex.blue {
    background: #2360a8;
    color: #cfe0f5;
}

.flex.off {
    visibility: hidden;
}

.track .name {
    width: 80px;
}

.track .dot {
    width: 5px;
    height: 5px;
    background: #222;
    border-radius: 50%;
}

/* arrange area */
.arrange {
    flex: 1;
    min-width: 0;
    background: #282828;
    overflow: hidden;
}

.arrange-bar {
    height: 24px;
}

.snap-box {
    width: 67px;
    height: 13px;
    display: flex;
    justify-content: flex-end;
    align-items: center;
    padding-right: 1px;
    background: #4a4a4a;
    border-radius: 2px;
}

.arrange-bar svg {
    height: 10px;
    width: 8px;
    color: #999;
}

.drag-label {
    color: #aaa;
    margin: 0 4px 0 8px;
    font-weight: 500;
}

.drag-box {
    width: 69px;
    height: 13px;
    display: flex;
    align-items: center;
    justify-content: space-between;
    padding: 0 3px 0 5px;
    background: #4a4a4a;
    border-radius: 2px;
}

.wave-btn,
.zoom-btns {
    display: flex;
    align-items: center;
    justify-content: space-around;
    height: 14px;
    background: #4a4a4a;
    border-radius: 2px;
    width: 20px;
    margin-left: 8px;
}

.zoom-btns {
    width: 43px;
}

.arrange-bar .zoom-btns svg,
.arrange-bar .wave-btn svg {
    width: 10px;
}

.slider {
    display: flex;
    align-items: center;
    margin-left: 6px;
    width: 43px;
    gap: 4px;
    padding-left: 3px;
    color: #999;
    background: #383838;
    height: 12px;
}

.slider i {
    width: 8px;
    height: 8px;
    border-radius: 50%;
    background: #999;
}

.ruler {
    height: 39px;
    background: #2b2b2b;
}

.ruler-time {
    height: 14px;
    display: flex;
    padding-left: 17px;
    background: repeating-linear-gradient(90deg, #555 0 1px, transparent 1px 3.860px) 0 0 / 100% 3px no-repeat, #2f2f2f;
}

.ruler-time span {
    width: 77.200px;
    flex: none;
    padding-left: 2px;
    border-left: 1px solid #666;
    font-size: 8.300px;
    line-height: 13px;
    letter-spacing: -0.3px;
}

.ruler-bars {
    height: 25px;
    display: flex;
    margin-left: -2px;
    background: repeating-linear-gradient(90deg, #666 0 1px, transparent 1px 8.750px) 0 100% / 100% 9px no-repeat;
}

.ruler-bars span {
    width: 70px;
    flex: none;
    padding-left: 1px;
    border-left: 1px solid #666;
    font-size: 9px;
    line-height: 10px;
}

.lane {
    display: flex;
    height: 9.430px;
    font-size: 8px;
    font-weight: 500;
    line-height: 8.500px;
    border-bottom: 1px solid #252525;
}

.lane.tall {
    height: 17px;
    line-height: 16px;
}

.lane.take {
    background: #3b3b3b;
}

.lane > span {
    flex: none;
    overflow: hidden;
    padding-left: 3px;
    display: flex;
    align-items: center;
    gap: 5px;
    color: #eee;
}

.lane svg {
    width: 11px;
    height: 7px;
}

.lane .indigo { background: #3420b8; }
.lane .amber { background: #bb6d14; color: #f4cf8f; border-top-left-radius: 4px; }
.lane .red { background: #b92718; color: #f4c2a8; border-top-left-radius: 4px; }
.lane .brown { background: #6e4318; color: #e6caa8; border-right: 1px solid #2c1c0c; }
.lane .green { background: #24a52d; color: #d4f5cf; border-right: 1px solid #145c1a; }
.lane .mid { padding-left: 140px; }
.lane .end { padding-left: 350px; }
.lane .takes { color: #f0eb8c; }
.lane .takes b { color: #ddd; font-weight: 500; }
.lane .volume {
    background: #333c46;
    color: #9aa5b0;
}

/* mixer */
.mixer {
    flex: 1;
    min-height: 0;
    display: flex;
    flex-direction: column;
    background: #494949;
}

.mixer-bar {
    height: 26px;
}

.sends-label {
    color: #aaa;
    font-weight: 500;
    margin-left: 7px;
    letter-spacing: 0;
}

.filters {
    margin-left: auto;
    display: flex;
    justify-content: space-between;
    align-items: center;
    height: 13px;
    width: 322px;
    padding: 0 9px 0 10px;
    background: #2360a8;
    border-radius: 3px;
    color: #fff;
    font-size: 8.800px;
}

.width-btn {
    width: 20px;
    height: 13px;
    margin-left: 6px;
    display: flex;
    align-items: center;
    justify-content: center;
    border-radius: 2px;
}

.width-btn.on {
    background: #2360a8;
    margin-left: 2px;
    margin-right: 2px;
}

.width-btn svg {
    width: 11px;
    height: 9px;
}

.mixer-body {
    flex: 1;
    display: flex;
    min-height: 0;
}

.row-labels {
    width: 62px;
    flex: none;
    border-right: 1px solid #222;
    padding: 1px 4px 0 0;
    display: flex;
    flex-direction: column;
    align-items: flex-end;
    font-size: 8px;
    letter-spacing: -0.150px;
    color: #bbb;
}

.row-labels span {
    line-height: 11px;
    height: 11px;
    flex: none;
}

.l-eq { margin-top: 6px; }
.l-midi { margin-top: 7px; }
.l-input { margin-top: 7px; }
.l-fx { margin-top: 6px; }
.l-sends { margin-top: 138px; }

.strips {
    flex: 1;
    overflow: hidden;
}

.strip-row {
    display: flex;
    height: 100%;
    margin-left: -21.800px;
}

.strip {
    width: 53.180px;
    flex: none;
    padding-top: 1px;
    border-right: 1px solid #3f3f3f;
    border-left: 1px solid #525252;
    display: flex;
    flex-direction: column;
    align-items: center;
}

.strip.selected {
    background: #666;
}

.gain {
    width: 46px;
    height: 6px;
    margin: 3px 0 2px;
    background: #464646;
    flex: none;
}

.eq-box {
    width: 46px;
    height: 20px;
    margin-bottom: 21.500px;
    background: #464646;
    flex: none;
}

.strip.metered .eq-box,
.strip.eqed .eq-box {
    background: linear-gradient(#333 50%, #555 50% 55%, #333 55%);
}

.strip.metered .gain {
    background: #333;
}

.strip.selected .gain,
.strip.selected .eq-box,
.strip.selected .fx {
    background: #606060;
}

.input {
    width: 46px;
    height: 11px;
    flex: none;
    display: flex;
    align-items: center;
    justify-content: space-evenly;
    font-size: 8px;
    letter-spacing: -0.2px;
    font-weight: 500;
    color: #ddd;
    border: 1px solid #404040;
    border-radius: 2px;
}

.input.green {
    background: #1f8f30;
    color: #d8f2da;
    border: 0;
}

.input.faint {
    color: #222;
}

.input svg {
    width: 10px;
    height: 7px;
    color: #bbb;
}

.fx {
    width: 46px;
    height: 132px;
    margin: 6.500px 0 16px;
    background: #464646;
    flex: none;
}

.send {
    width: 46px;
    height: 13.500px;
    display: flex;
    gap: 2px;
    align-items: center;
    flex: none;
    font-size: 8px;
}

.send b {
    width: 32px;
    height: 12px;
    line-height: 12px;
    flex: none;
    border-radius: 2px;
    text-align: center;
    font-weight: 500;
    color: #fff;
    background: #2360a8;
}

.send i {
    width: 12px;
    height: 12px;
    flex: none;
    border-radius: 50%;
    background: #8c8c8c;
    border: 2px solid #333;
    border-bottom-color: #777;
}

.send.gray b { background: #555; }
.send i.green { background: #85c286; border-color: #3f8f42 #3f8f42 #333 #3f8f42; }
.send i.pale { background: #98a3b3; border-color: #76879c #76879c #333 #76879c; }
.send i.small { width: 10px; height: 10px; margin-left: 1px; border-width: 1.500px; }

/* save dialog */
.dialog {
    position: absolute;
    left: 351px;
    top: 97px;
    width: 574px;
    height: 391px;
    display: flex;
    border-radius: 7px;
    overflow: hidden;
    background: #fefefe;
    color: #333;
    box-shadow: 0 6px 18px rgba(0, 0, 0, 0.5), 0 0 1px #000;
    font-size: 8.700px;
}

.places {
    width: 87px;
    flex: none;
    padding: 0 7px;
    background: linear-gradient(160deg, #d6dad7, #d3d7cf 30%, #cfcfcf 55%, #d0d0d0);
    border-right: 1px solid #c0c0c0;
}

.lights {
    display: flex;
    gap: 5px;
    height: 19px;
    padding-top: 5px;
    margin-left: -1px;
}

.lights i {
    width: 8.500px;
    height: 8.500px;
    border-radius: 50%;
    background: #b9bbb9;
}

.lights i.green {
    background: #34c749;
}

.places h4 {
    height: 21.600px;
    padding: 11px 4px 0;
    line-height: 10px;
    font-size: 8px;
    font-weight: 600;
    color: #8c8e8b;
}

.places p {
    height: 18.840px;
    display: flex;
    align-items: center;
    gap: 4px;
    padding: 0 5px 0 5px;
    color: #3c3e3c;
    border-radius: 4px;
}

.places p svg {
    width: 11px;
    height: 11px;
    color: #2f6fca;
}

.places p.teal svg { color: #35a8b0; }
.places p.grey svg { color: #666; }

.places p.current {
    background: #b8b8b8;
}

.places p .eject {
    width: 8px;
    height: 8px;
    margin-left: auto;
}

.dialog-main {
    flex: 1;
    min-width: 0;
    display: flex;
    flex-direction: column;
}

.dialog-title {
    height: 19px;
    flex: none;
    background: #ececec;
    line-height: 18px;
    text-align: center;
    font-weight: 600;
    font-size: 8.800px;
    padding-right: 2px;
}

.field-row {
    display: flex;
    align-items: center;
    flex: none;
    height: 16px;
}

.field-row label {
    width: 158px;
    text-align: right;
    color: #888;
    font-size: 8px;
}

.name-row { margin-top: 6px; }
.tags-row { margin-top: 6px; }

.name-field,
.tags-field {
    width: 159px;
    height: 16px;
    margin-left: 6px;
    border: 2px solid #6d9bd8;
    border-radius: 4px;
    padding-left: 6px;
    line-height: 12px;
    letter-spacing: -0.080px;
}

.tags-field {
    height: 14px;
    border: 1px solid #eee;
    border-bottom-color: #ccc;
    border-radius: 2px;
}

.name-field mark {
    background: #a5c8f2;
    color: #333;
}

.nav-row {
    display: flex;
    align-items: center;
    flex: none;
    height: 15px;
    margin: 11.500px 0 14.500px;
    padding-left: 13px;
}

.nav-row > span {
    display: flex;
    align-items: center;
    height: 14px;
    border-radius: 3px;
    background: #fff;
    box-shadow: 0 0.500px 1px rgba(0, 0, 0, 0.22);
}

.nav-btns svg {
    width: 16px;
    height: 8px;
    color: #aaa;
}

.nav-row .view-btn {
    width: 32px;
    margin-left: 6px;
    justify-content: space-between;
    padding: 0 4px 0 6px;
}

.view-btn svg {
    width: 7px;
    height: 7px;
}

.view-btn .wide {
    width: 11px;
    height: 8px;
}

.nav-row .path-box {
    width: 141px;
    margin-left: 43px;
    padding: 0 3px 0 6px;
    gap: 3px;
}

.folder {
    width: 10px;
    height: 9px;
}

.path-arrows {
    width: 10px;
    height: 10px;
    margin-left: auto;
    background: #2d74d0;
    color: #fff;
    border-radius: 2px;
}

.nav-row .collapse-btn {
    width: 13px;
    margin-left: 4px;
    justify-content: center;
}

.collapse-btn svg {
    width: 8px;
    height: 8px;
}

.nav-row .search-box {
    width: 104px;
    margin-left: 46px;
    padding-left: 5px;
    gap: 4px;
    color: #aaa;
}

.search-box svg {
    width: 9px;
    height: 9px;
    color: #555;
}

.browser {
    height: 68px;
    flex: none;
    display: flex;
    overflow: hidden;
    border-top: 1px solid #e2e2e2;
    border-bottom: 1px solid #e2e2e2;
    font-size: 8.500px;
    letter-spacing: -0.230px;
}

.browser-col {
    width: 138px;
    flex: none;
    padding: 3px 8px 0 7px;
    border-right: 1px solid #e4e4e4;
}

.browser-col.first {
    width: 73px;
    margin-top: -7px;
    padding: 0 7px 0 0;
}

.browser-col:last-child {
    border: 0;
}

.entry {
    display: flex;
    align-items: center;
    gap: 4px;
    height: 14.850px;
    padding: 0 3px 0 4px;
    border-radius: 3px;
}

.first .entry {
    padding-left: 0;
}

.entry.open {
    background: #d4d4d4;
}

.entry.faint {
    color: #bbb;
}

.entry .go {
    width: 6px;
    height: 6px;
    margin-left: auto;
    color: #999;
}

.entry .file {
    width: 10px;
    height: 8px;
}

.options {
    padding-top: 11px;
    flex: 1;
    font-size: 8.800px;
    letter-spacing: -0.090px;
}

.option {
    display: flex;
    align-items: center;
    height: 16.850px;
}

.option label {
    width: 241px;
    text-align: right;
    margin-right: 5px;
}

.option i {
    width: 10px;
    height: 10px;
    margin-right: 4px;
    border: 1px solid #ccc;
    flex: none;
}

.files-option {
    margin-top: 5px;
}

.check {
    border-radius: 2px;
}

.radio {
    border-radius: 50%;
}

.option .radio.checked {
    border: 3px solid #2a6fc0;
}

.option .check.checked {
    background: #2a6fc0;
    border: 0;
}

.dialog-foot {
    height: 41px;
    flex: none;
    display: flex;
    align-items: center;
    border-top: 1px solid #e6e6e6;
    padding: 0 14px 1px 13px;
}

button {
    height: 14px;
    padding: 0;
    border: 0;
    border-radius: 3px;
    background: #fff;
    box-shadow: 0 0.500px 1px rgba(0, 0, 0, 0.3);
    font: 400 8.700px Inter, "Liberation Sans", sans-serif;
    color: #333;
}

.new-folder {
    width: 60px;
}

.cancel {
    width: 48px;
    margin-left: auto;
    background: #eee;
    color: #666;
}

.save {
    width: 48px;
    margin-left: 7px;
    background: #1f78f0;
    color: #fff;
    font-weight: 500;
}

.pointer {
    position: absolute;
    left: 828px;
    top: 453.500px;
    width: 30px;
    height: 30px;
}
```
FILE: script.js
```js
const use = (id, cls = '') => `<svg class="${cls}"><use href="#${id}"/></svg>`;

// [number, number colour, instrument colour, M/S/R/I buttons, flex, name]
const tracks = [
    [22, 'brown', 'none', 'MSRI', 'blue', 'Sleigh Bells'],
    [23, 'brown', 'gold', 'MSRI', 'blue', 'Cowbell'],
    [25, 'green', 'gold', 'MSRI', 'blue', 'Cymbal...nts_bip'],
    [27, 'green', 'red', 'MSRI', '', 'Stylus_Drums_bip'],
    [32, 'green', 'red', 'MSRI', '', 'Stylus_...gas_bip'],
    [34, 'green', 'red', 'MSRI', '', 'Stylus_Shaker_bip'],
    [38, 'lime', 'yellow', 'mSrI', 'blue', 'Fostina Sax'],
    [39, 'navy', '', 'mSRI', 'blue', 'Crowd Walla Party'],
    [40, 'navy', '', 'MSRI', '', 'Remix P...rowd FX'],
    [41, 'navy', '', 'MSRI', '', 'Crowd...Children'],
    [42, 'navy', 'gold', 'mSRI', 'blue', 'Arena C...d Cheer'],
    [43, 'navy', '', 'mSRI', 'blue', 'Verbal Instructions'],
    [44, 'navy', '', 'MSR', '', 'Audio Track'],
    [45, 'cyan', '', 'MSR', '', 'Client Demo'],
    [46, 'purple', '', 'M', 'off', 'Master']
];

document.getElementById('track-list').innerHTML = tracks.map(([num, color, inst, btns, flex, name], row) => {
    const buttons = ['M', 'S', 'R', 'I'].map((label, i) => {
        const ch = btns[i] || '';
        const state = !ch ? 'off' : ch === 'm' ? 'cyan' : ch === 'r' ? 'rec' : '';
        return `<span class="btn ${state} ${i === 2 ? 'gap' : ''}">${ch ? label : ''}</span>`;
    }).join('');
    return `<div class="track ${num === 38 ? 'selected' : ''}"><i class="edge ${row > 7 ? 'brown' : ''}"></i>
        <span class="num ${color}">${num}</span><i class="inst ${inst}"></i>${buttons}
        ${use('flex', 'flex ' + flex)}<span class="name">${name}</span><i class="dot"></i></div>`;
}).join('');

document.getElementById('ruler-time').innerHTML =
    ['1:02:30', '1:02:50', '1:03:10', '1:03:30', '1:03:50'].map(t => `<span>${t}</span>`).join('');
document.getElementById('ruler-bars').innerHTML =
    [65, 73, 81, 89, 97, 105].map(n => `<span>${n}</span>`).join('');

// each lane is a run of [width, class, label]
const stereo = use('stereo');
const lanes = [
    ['tall', [[15, 'indigo', ''], [70, 'amber', 'Trans Chrous'], [269, 'red', 'Outro']]],
    ['', [[15, 'brown', ''], [70, 'brown', 'Sleigh Bells#01.3'], [210, '', ''], [59, 'brown', 'Sleigh Bells#01.3']]],
    ['', [[15, 'brown', ''], [70, 'brown', 'Cowbell#02.2'], [62, '', ''], [78, 'brown', 'Cowbell#02.3' + use('mono')], [70, 'brown', 'Cowbell#02.4']]],
    ['', [[33, 'green', 'Cymbal'], [43, '', ''], [210, 'green', 'Cymbal Elements_bip.5' + stereo], [39, 'green', 'Cymbal El']]],
    ['', [[355, 'green mid', 'Stylus_bip' + stereo]]],
    ['', [[6, '', ''], [349, 'green', 'Stylus_Congas_bip.1' + stereo]]],
    ['', [[365, 'green end', 'Stylus_bip']]],
    ['take', [[18, '', ''], [200, 'takes', '<b>▶&nbsp; 4</b>Fostina Sax: Take 7' + use('mono')]]],
    ['', []], ['', []], ['', []], ['', []],
    ['', [[7, '', ''], [11, 'volume', 'V'], [59, '', ''], [11, 'volume', 'V']]]
];

document.getElementById('lanes').innerHTML = lanes.map(([cls, regions]) =>
    `<div class="lane ${cls}">` + regions.map(([w, c, label]) =>
        `<span class="${c}" style="width:${w}px">${label}</span>`).join('') + '</div>').join('');

// mixer strips: [input kind, input label, inserts, sends, strip class]
const small = 'small';
const b5 = [['Bus 5', 'pale'], ['B 23', small]];
const b5dark = [['Bus 5', small], ['B 23', small]];
const strips = [
    ['green', 'Opus', [], [null, ['B 23', 'pale']]],
    ['green', 'Opus', [], [null, ['B 23', 'pale small']]],
    ['stereo', 'In 17-18', ['JJP-String', 'Pro-Q 3'], [['B 13', 'green']]],
    ['green', 'Keyscape', ['Pro-Q 3'], b5],
    ['stereo', 'In 17-18', ['Pro-Q 3'], b5],
    ['green', 'Omnisphere', [], b5dark],
    ['green', 'Keyscape', ['Pro-Q 3', 'Little Pla', 'Channel EQ'], b5dark],
    ['green', 'Omnisphere', [], [['Bus 5', small], ['B 23', 'pale small']]],
    ['mono', 'Snr Bott', ['Aphex Vint'], [['Bus 1', small], ['Bus 2', small], ['Bus 8', 'green']]],
    ['mono', 'Snr Bott', ['Aphex Vint', 'TDR Nova'], [['Bus 8', 'green']]],
    ['stereo', 'In 3-4', ['JJP-Cymb...', 'Pro-Q 3'], [['Bus 5', small, 'gray'], ['Bus 7', 'pale small']]],
    ['stereo', 'In 1-2', ['SSL Native'], [['Bus 7', 'green']]],
    ['stereo', 'In 1-2', ['JJP-Cymb...'], [['Bus 8', 'green']]],
    ['stereo', 'In 3-4', ['JJP-Cymb...'], [['Bus 8', 'green']]],
    ['mono', 'Snr Bott', ['Waves Tune', 'Pro-Q 3', 'UADx 1176'], [null, ['B 15', 'green']], 'selected'],
    ['stereo', 'In 1-2', [], []],
    ['stereo', 'In 1-2', [], []],
    ['stereo', 'In 1-2', [], []],
    ['stereo', 'In 1-2', [], []],
    ['mono', 'Snr Bott', ['Compressor', 'Channel EQ'], [['Bus 1', ''], ['Bus 2', '']], 'metered'],
    ['mono', 'Input', ['Compressor', 'Channel EQ'], [['Bus 1', ''], ['Bus 2', '']], 'eqed']
];

const send = s => s ? `<div class="send ${s[2] || ''}"><b>${s[0]}</b><i class="${s[1]}"></i></div>` : '<div class="send"></div>';

document.getElementById('strip-row').innerHTML = strips.map(([kind, label, fx, sends, cls = '']) => {
    const fxClass = cls === 'metered' ? 'gray' : cls === 'eqed' ? 'dim' : 'blue';
    const input = kind === 'green'
        ? `<div class="input green">${label}</div>`
        : `<div class="input ${label === 'Input' ? 'faint' : ''}">${use(kind)}${label}</div>`;
    return `<div class="strip ${cls}"><div class="slot setting">Setting</div><div class="gain"></div>
        <div class="eq-box"></div>${input}
        <div class="fx">${fx.map(f => `<div class="slot ${fxClass}">${f}</div>`).join('')}</div>
        ${sends.map(send).join('')}</div>`;
}).join('');

// inspector channel strips
const scale = ['0', '3', '6', '9', '12', '15', '18', '21', '24', '30', '35', '40', '45', '50', '60'];
const insStrips = [
    {
        name: 'Fostina Sax', input: use('mono') + 'Snr Bott',
        fx: [['blue', 'Waves Tune'], ['blue', 'Pro-Q 3'], ['blue', 'UADx 1176']],
        send: ['B 15', 'green'], out: ['gray', 'Stereo Out'], read: 'green', values: ['-∞', ''], cap: 80,
        buttons: '<div class="ins-buttons end"><span class="rec"><b>R</b> I</span></div><div class="ins-buttons"><span class="muted">M</span><span>S</span></div>'
    },
    {
        name: 'Output', input: stereo, wide: 'wide',
        fx: [['gray', 'Neutron 4'], ['blue', 'Ozone 11 D'], ['blue', 'DeEsser (s'], ['blue', 'SSLComp (s'], ['gray', 'PuigTec EQ'], ['none', ''],
            ['gray', 'Oxford Inf'], ['gray', 'L1 limiter'], ['blue', 'Level Mtr'], ['blue', 'Dorrough ('], ['blue', 'ADPTR Metr']],
        mastering: 'Mastering',
        out: ['none', ''], read: 'read', values: ['0.0', '-10.1'], cap: 13,
        buttons: '<div class="ins-buttons end"><span>Bnc</span></div><div class="ins-buttons"><span>M</span><span>S</span></div>'
    }
];

document.getElementById('inspector-strips').innerHTML = insStrips.map(s => `<div class="ins-strip ${s.wide || ''}">
    <div class="slot setting">Setting</div><div class="eq">EQ</div><div class="ins-input">${s.input}</div>
    <div class="ins-fx">${s.fx.map(([c, t]) => `<div class="slot ${c}">${t}</div>`).join('')}${s.mastering ? `<div class="slot dark" style="margin-top:6px">${s.mastering}</div>` : ''}</div>
    <div class="ins-send">${s.send ? send(s.send) : ''}</div>
    <div class="slot out ${s.out[0]}">${s.out[1]}</div><div class="slot dark group">Group</div>
    <div class="slot ${s.read}">Read</div><div class="pan"></div>
    <div class="values"><span>${s.values[0]}</span><span class="hot">${s.values[1]}</span></div>
    <div class="fader"><div class="fader-track"><i class="fader-cap" style="margin-top:${s.cap}px"></i></div>
    <div class="scale">${scale.map(n => `<span>${n}</span>`).join('')}</div><div class="meter"></div></div>
    ${s.buttons}<div class="ins-name">${s.name}</div></div>`).join('');

// column browser
const columns = [
    [['ments', ''], ['ary 1', 'faint'], ['ginal Movies', ''], ['', ''], ['', 'open']],
    [['ACP Show Reels', ''], ['At The Speed Of Life', ''], ['Childrens Songs', ''], ['Christmas Songs', 'open'], ['', '']],
    [['Christmas Masters', ''], ['Christmas Songs Mix', ''], ['Christmas Time Is Here', ''], ['Jingle Bell Funk', 'open'], ['', '']],
    [['Audio Files', ''], ['Bounces', ''], ['Jingle Bell Funk', 'faint file']]
];

const fileIcon = '<svg class="file" viewBox="0 0 10 8"><path d="M2 4l1.500-3h3L8 4v3H2z" fill="#ccc"/></svg>';

document.getElementById('browser').innerHTML = columns.map((col, i) =>
    `<div class="browser-col ${i === 0 ? 'first' : ''}">` + col.map(([label, cls]) => {
        const icon = i === 0 ? '' : cls.includes('file') ? fileIcon : use('folder', 'folder');
        const go = cls.includes('faint') ? '' : use('right', 'go');
        return `<div class="entry ${cls.replace('file', '')}">${icon}${label}${go}</div>`;
    }).join('') + '</div>').join('');
```
